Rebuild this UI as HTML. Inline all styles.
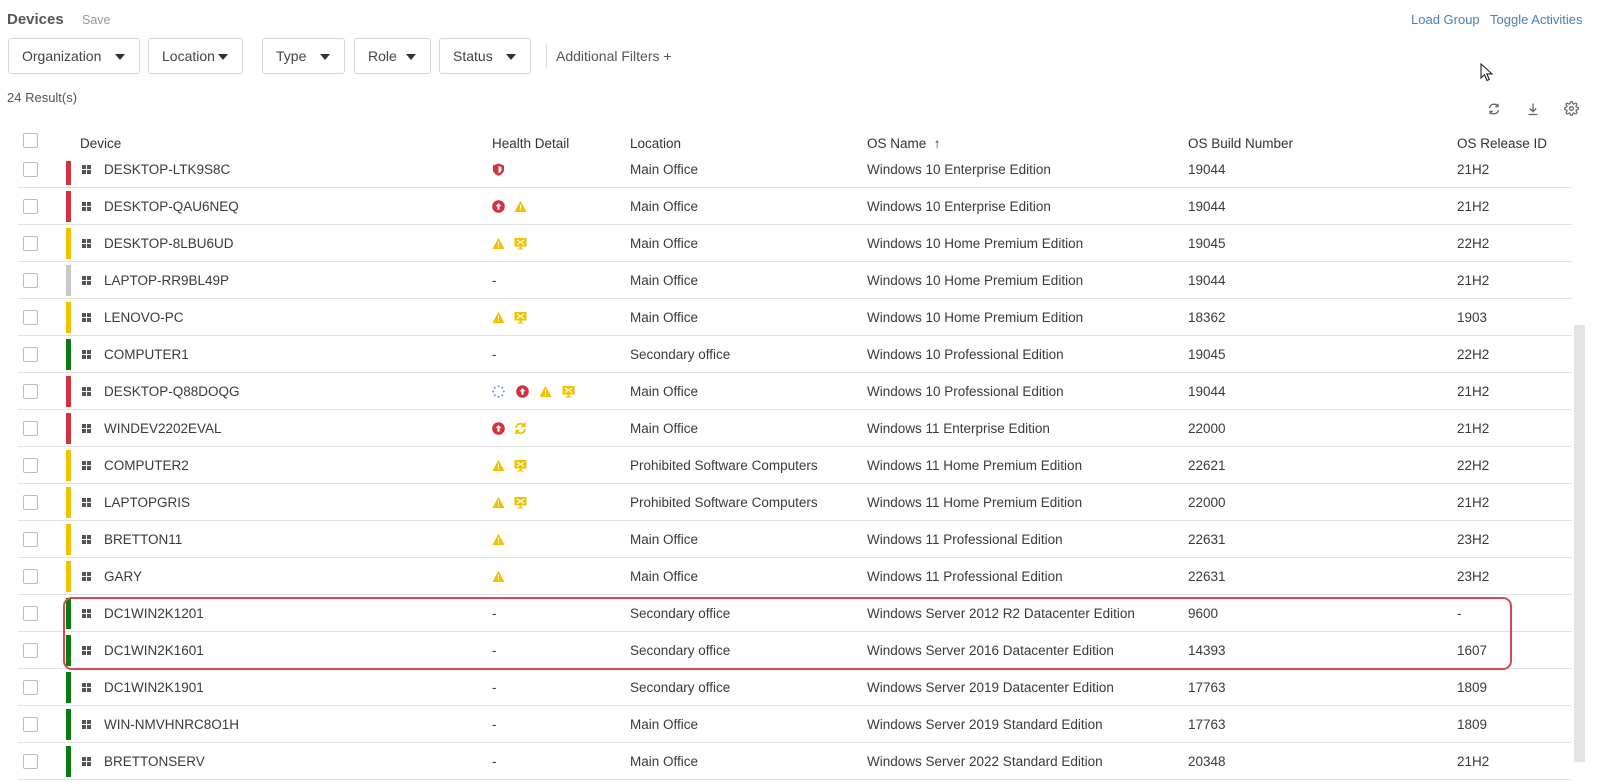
<!DOCTYPE html>
<html><head><meta charset="utf-8"><style>
*{box-sizing:border-box;margin:0;padding:0}
body{width:1600px;height:783px;overflow:hidden;background:#fff;font-family:"Liberation Sans",sans-serif;color:#333;font-size:13px;position:relative}
.a{position:absolute;white-space:nowrap}
.btn{position:absolute;top:38px;height:36px;border:1px solid #d6d6d6;border-radius:3px;font-size:14px;color:#444;padding:0 0 0 13px;line-height:34px;white-space:nowrap}
.btn i{position:absolute;right:14px;top:15px;width:0;height:0;border-left:5px solid transparent;border-right:5px solid transparent;border-top:6px solid #333}
.row{position:absolute;left:0;width:1600px;height:37px}
.row .ln{position:absolute;left:18px;width:1554px;bottom:0;height:1px;background:#e2e2e2}
.cb{position:absolute;left:23px;top:11px;width:15px;height:15px;border:1px solid #bdbdbd;border-radius:2px;background:#fff}
.bar{position:absolute;left:66px;top:3px;width:5px;height:31px}
.r{background:#d0323f}.y{background:#f2c200}.g{background:#0b7a12}.gr{background:#c8c8cc}
.win{position:absolute;left:82px;top:14px;width:10px;height:10px}
.win b{position:absolute;width:4px;height:4px;background:#555}
.t{position:absolute;top:11px;font-size:13.5px;color:#3a3a3a;white-space:nowrap}
.c1{left:104px}.c2{left:492px}.c3{left:630px}.c4{left:867px}.c5{left:1188px}.c6{left:1457px}
.hi{position:absolute;left:492px;top:0;width:120px;height:37px}
.ic{position:absolute;top:12px;width:13px;height:13px}
.h{position:absolute;top:136px;font-size:13.5px;color:#333}
</style></head><body>
<div class="a" style="left:7px;top:11px;font-size:15px;font-weight:bold;color:#555">Devices</div>
<div class="a" style="left:82px;top:13px;font-size:12.5px;color:#999">Save</div>
<div class="a" style="left:1411px;top:12px;font-size:13px;color:#4a7fb5">Load Group</div>
<div class="a" style="left:1490px;top:12px;font-size:13px;color:#4a7fb5">Toggle Activities</div>

<div class="btn" style="left:8px;width:132px">Organization<i></i></div>
<div class="btn" style="left:148px;width:95px">Location<i></i></div>
<div class="btn" style="left:262px;width:83px">Type<i></i></div>
<div class="btn" style="left:354px;width:77px">Role<i></i></div>
<div class="btn" style="left:439px;width:92px">Status<i></i></div>
<div class="a" style="left:546px;top:44px;width:1px;height:24px;background:#ddd"></div>
<div class="a" style="left:556px;top:48px;font-size:14px;color:#555">Additional Filters +</div>
<div class="a" style="left:7px;top:90px;font-size:13px;color:#555">24 Result(s)</div>

<svg class="a" style="left:1487px;top:102px" width="14" height="14" viewBox="0 0 14 14" fill="none" stroke="#666" stroke-width="1.3"><path d="M2.5 6A4.6 4.6 0 0 1 11 4.5M11.5 8A4.6 4.6 0 0 1 3 9.5M11 1.8V4.6H8.2M3 12.2V9.4h2.8"/></svg>
<svg class="a" style="left:1526px;top:102px" width="14" height="14" viewBox="0 0 14 14" fill="none" stroke="#666" stroke-width="1.3"><path d="M7 1.5v8M3.8 6.5 7 9.7l3.2-3.2M2.5 12.5h9"/></svg>
<svg class="a" style="left:1564px;top:101px" width="15" height="15" viewBox="0 0 24 24" fill="none" stroke="#666" stroke-width="2"><circle cx="12" cy="12" r="3"/><path d="M19.4 15a1.7 1.7 0 0 0 .3 1.8l.1.1a2 2 0 1 1-2.8 2.8l-.1-.1a1.7 1.7 0 0 0-1.8-.3 1.7 1.7 0 0 0-1 1.5V21a2 2 0 1 1-4 0v-.1a1.7 1.7 0 0 0-1.1-1.5 1.7 1.7 0 0 0-1.8.3l-.1.1a2 2 0 1 1-2.8-2.8l.1-.1a1.7 1.7 0 0 0 .3-1.8 1.7 1.7 0 0 0-1.5-1H3a2 2 0 1 1 0-4h.1a1.7 1.7 0 0 0 1.5-1.1 1.7 1.7 0 0 0-.3-1.8l-.1-.1a2 2 0 1 1 2.8-2.8l.1.1a1.7 1.7 0 0 0 1.8.3H9a1.7 1.7 0 0 0 1-1.5V3a2 2 0 1 1 4 0v.1a1.7 1.7 0 0 0 1 1.5 1.7 1.7 0 0 0 1.8-.3l.1-.1a2 2 0 1 1 2.8 2.8l-.1.1a1.7 1.7 0 0 0-.3 1.8V9a1.7 1.7 0 0 0 1.5 1H21a2 2 0 1 1 0 4h-.1a1.7 1.7 0 0 0-1.5 1z"/></svg>
<svg class="a" style="left:1480px;top:63px" width="14" height="20" viewBox="0 0 14 20"><path d="M1 1v14l3.5-3.3 2.5 5.8 2.3-1-2.5-5.6H12z" fill="#fff" stroke="#222" stroke-width="1.1"/></svg>

<div class="a" style="left:1574px;top:325px;width:11px;height:437px;background:#e3e3e3"></div>

<div class="row" style="top:151px"><div class="cb"></div><div class="bar r" style="top:10px;height:24px"></div><div class="win"><b style="left:0;top:0"></b><b style="left:5px;top:0"></b><b style="left:0;top:5px"></b><b style="left:5px;top:5px"></b></div><div class="t c1">DESKTOP-LTK9S8C</div><div class="hi"><svg class="ic" style="left:0" viewBox="0 0 13 13"><path d="M6.5 .5 12 2.5v4c0 3-2.5 5.2-5.5 6.2C3.5 11.7 1 9.5 1 6.5v-4z" fill="#d0323f"/><path d="M6.5 3 9.5 4v2.5c0 1.7-1.3 3-3 3.7z" fill="#fff"/></svg></div><div class="t c3">Main Office</div><div class="t c4">Windows 10 Enterprise Edition</div><div class="t c5">19044</div><div class="t c6">21H2</div><div class="ln"></div></div>

<div class="a" style="left:0;top:124px;width:1572px;height:32px;background:#fff"></div>
<div class="a" style="left:23px;top:133px;width:15px;height:15px;border:1px solid #bdbdbd;border-radius:2px"></div>
<div class="h" style="left:80px">Device</div>
<div class="h" style="left:492px">Health Detail</div>
<div class="h" style="left:630px">Location</div>
<div class="h" style="left:867px">OS Name &nbsp;↑</div>
<div class="h" style="left:1188px">OS Build Number</div>
<div class="h" style="left:1457px">OS Release ID</div>

<div class="row" style="top:188px"><div class="cb"></div><div class="bar r"></div><div class="win"><b style="left:0;top:0"></b><b style="left:5px;top:0"></b><b style="left:0;top:5px"></b><b style="left:5px;top:5px"></b></div><div class="t c1">DESKTOP-QAU6NEQ</div><div class="hi"><svg class="ic" style="left:0" viewBox="0 0 13 13"><circle cx="6.5" cy="6.5" r="6.3" fill="#d0323f"/><path d="M6.5 3 3.5 6.3h2v3.4h2V6.3h2z" fill="#fff"/></svg><svg class="ic" style="left:22px" viewBox="0 0 13 13"><path d="M6.5.8 12.6 12H.4z" fill="#f2c200"/><path d="M6 4.5h1v4H6zM6 9.5h1v1H6z" fill="#fff"/></svg></div><div class="t c3">Main Office</div><div class="t c4">Windows 10 Enterprise Edition</div><div class="t c5">19044</div><div class="t c6">21H2</div><div class="ln"></div></div>

<div class="row" style="top:225px"><div class="cb"></div><div class="bar y"></div><div class="win"><b style="left:0;top:0"></b><b style="left:5px;top:0"></b><b style="left:0;top:5px"></b><b style="left:5px;top:5px"></b></div><div class="t c1">DESKTOP-8LBU6UD</div><div class="hi"><svg class="ic" style="left:0" viewBox="0 0 13 13"><path d="M6.5.8 12.6 12H.4z" fill="#f2c200"/><path d="M6 4.5h1v4H6zM6 9.5h1v1H6z" fill="#fff"/></svg><svg class="ic" style="left:22px" viewBox="0 0 13 13"><rect x=".5" y="1" width="12" height="8.5" fill="#f2c200"/><path d="M3 3l7 4.5M10 3 3 7.5" stroke="#fff" stroke-width="1.3"/><path d="M5.5 9.5h2v2h2v1h-6v-1h2z" fill="#f2c200"/></svg></div><div class="t c3">Main Office</div><div class="t c4">Windows 10 Home Premium Edition</div><div class="t c5">19045</div><div class="t c6">22H2</div><div class="ln"></div></div>

<div class="row" style="top:262px"><div class="cb"></div><div class="bar gr"></div><div class="win"><b style="left:0;top:0"></b><b style="left:5px;top:0"></b><b style="left:0;top:5px"></b><b style="left:5px;top:5px"></b></div><div class="t c1">LAPTOP-RR9BL49P</div><div class="t c2">-</div><div class="t c3">Main Office</div><div class="t c4">Windows 10 Home Premium Edition</div><div class="t c5">19044</div><div class="t c6">21H2</div><div class="ln"></div></div>

<div class="row" style="top:299px"><div class="cb"></div><div class="bar y"></div><div class="win"><b style="left:0;top:0"></b><b style="left:5px;top:0"></b><b style="left:0;top:5px"></b><b style="left:5px;top:5px"></b></div><div class="t c1">LENOVO-PC</div><div class="hi"><svg class="ic" style="left:0" viewBox="0 0 13 13"><path d="M6.5.8 12.6 12H.4z" fill="#f2c200"/><path d="M6 4.5h1v4H6zM6 9.5h1v1H6z" fill="#fff"/></svg><svg class="ic" style="left:22px" viewBox="0 0 13 13"><rect x=".5" y="1" width="12" height="8.5" fill="#f2c200"/><path d="M3 3l7 4.5M10 3 3 7.5" stroke="#fff" stroke-width="1.3"/><path d="M5.5 9.5h2v2h2v1h-6v-1h2z" fill="#f2c200"/></svg></div><div class="t c3">Main Office</div><div class="t c4">Windows 10 Home Premium Edition</div><div class="t c5">18362</div><div class="t c6">1903</div><div class="ln"></div></div>

<div class="row" style="top:336px"><div class="cb"></div><div class="bar g"></div><div class="win"><b style="left:0;top:0"></b><b style="left:5px;top:0"></b><b style="left:0;top:5px"></b><b style="left:5px;top:5px"></b></div><div class="t c1">COMPUTER1</div><div class="t c2">-</div><div class="t c3">Secondary office</div><div class="t c4">Windows 10 Professional Edition</div><div class="t c5">19045</div><div class="t c6">22H2</div><div class="ln"></div></div>

<div class="row" style="top:373px"><div class="cb"></div><div class="bar r"></div><div class="win"><b style="left:0;top:0"></b><b style="left:5px;top:0"></b><b style="left:0;top:5px"></b><b style="left:5px;top:5px"></b></div><div class="t c1">DESKTOP-Q88DOQG</div><div class="hi"><svg class="ic" style="left:0" viewBox="0 0 13 13" fill="#6a8fc0"><circle cx="6.5" cy="1.2" r="1"/><circle cx="10.3" cy="2.8" r="1"/><circle cx="11.8" cy="6.5" r="1"/><circle cx="10.3" cy="10.2" r="1"/><circle cx="6.5" cy="11.8" r="1"/><circle cx="2.7" cy="10.2" r="1"/><circle cx="1.2" cy="6.5" r="1"/><circle cx="2.7" cy="2.8" r="1"/></svg><svg class="ic" style="left:24px" viewBox="0 0 13 13"><circle cx="6.5" cy="6.5" r="6.3" fill="#d0323f"/><path d="M6.5 3 3.5 6.3h2v3.4h2V6.3h2z" fill="#fff"/></svg><svg class="ic" style="left:47px" viewBox="0 0 13 13"><path d="M6.5.8 12.6 12H.4z" fill="#f2c200"/><path d="M6 4.5h1v4H6zM6 9.5h1v1H6z" fill="#fff"/></svg><svg class="ic" style="left:70px" viewBox="0 0 13 13"><rect x=".5" y="1" width="12" height="8.5" fill="#f2c200"/><path d="M3 3l7 4.5M10 3 3 7.5" stroke="#fff" stroke-width="1.3"/><path d="M5.5 9.5h2v2h2v1h-6v-1h2z" fill="#f2c200"/></svg></div><div class="t c3">Main Office</div><div class="t c4">Windows 10 Professional Edition</div><div class="t c5">19044</div><div class="t c6">21H2</div><div class="ln"></div></div>

<div class="row" style="top:410px"><div class="cb"></div><div class="bar r"></div><div class="win"><b style="left:0;top:0"></b><b style="left:5px;top:0"></b><b style="left:0;top:5px"></b><b style="left:5px;top:5px"></b></div><div class="t c1">WINDEV2202EVAL</div><div class="hi"><svg class="ic" style="left:0" viewBox="0 0 13 13"><circle cx="6.5" cy="6.5" r="6.3" fill="#d0323f"/><path d="M6.5 3 3.5 6.3h2v3.4h2V6.3h2z" fill="#fff"/></svg><svg class="ic" style="left:22px" viewBox="0 0 13 13" fill="none" stroke="#f2c200" stroke-width="1.8"><path d="M2 6a4.6 4.6 0 0 1 8.5-2M11 7a4.6 4.6 0 0 1-8.5 2M10.8 1v3.2H7.6M2.2 12V8.8h3.2"/></svg></div><div class="t c3">Main Office</div><div class="t c4">Windows 11 Enterprise Edition</div><div class="t c5">22000</div><div class="t c6">21H2</div><div class="ln"></div></div>

<div class="row" style="top:447px"><div class="cb"></div><div class="bar y"></div><div class="win"><b style="left:0;top:0"></b><b style="left:5px;top:0"></b><b style="left:0;top:5px"></b><b style="left:5px;top:5px"></b></div><div class="t c1">COMPUTER2</div><div class="hi"><svg class="ic" style="left:0" viewBox="0 0 13 13"><path d="M6.5.8 12.6 12H.4z" fill="#f2c200"/><path d="M6 4.5h1v4H6zM6 9.5h1v1H6z" fill="#fff"/></svg><svg class="ic" style="left:22px" viewBox="0 0 13 13"><rect x=".5" y="1" width="12" height="8.5" fill="#f2c200"/><path d="M3 3l7 4.5M10 3 3 7.5" stroke="#fff" stroke-width="1.3"/><path d="M5.5 9.5h2v2h2v1h-6v-1h2z" fill="#f2c200"/></svg></div><div class="t c3">Prohibited Software Computers</div><div class="t c4">Windows 11 Home Premium Edition</div><div class="t c5">22621</div><div class="t c6">22H2</div><div class="ln"></div></div>

<div class="row" style="top:484px"><div class="cb"></div><div class="bar y"></div><div class="win"><b style="left:0;top:0"></b><b style="left:5px;top:0"></b><b style="left:0;top:5px"></b><b style="left:5px;top:5px"></b></div><div class="t c1">LAPTOPGRIS</div><div class="hi"><svg class="ic" style="left:0" viewBox="0 0 13 13"><path d="M6.5.8 12.6 12H.4z" fill="#f2c200"/><path d="M6 4.5h1v4H6zM6 9.5h1v1H6z" fill="#fff"/></svg><svg class="ic" style="left:22px" viewBox="0 0 13 13"><rect x=".5" y="1" width="12" height="8.5" fill="#f2c200"/><path d="M3 3l7 4.5M10 3 3 7.5" stroke="#fff" stroke-width="1.3"/><path d="M5.5 9.5h2v2h2v1h-6v-1h2z" fill="#f2c200"/></svg></div><div class="t c3">Prohibited Software Computers</div><div class="t c4">Windows 11 Home Premium Edition</div><div class="t c5">22000</div><div class="t c6">21H2</div><div class="ln"></div></div>

<div class="row" style="top:521px"><div class="cb"></div><div class="bar y"></div><div class="win"><b style="left:0;top:0"></b><b style="left:5px;top:0"></b><b style="left:0;top:5px"></b><b style="left:5px;top:5px"></b></div><div class="t c1">BRETTON11</div><div class="hi"><svg class="ic" style="left:0" viewBox="0 0 13 13"><path d="M6.5.8 12.6 12H.4z" fill="#f2c200"/><path d="M6 4.5h1v4H6zM6 9.5h1v1H6z" fill="#fff"/></svg></div><div class="t c3">Main Office</div><div class="t c4">Windows 11 Professional Edition</div><div class="t c5">22631</div><div class="t c6">23H2</div><div class="ln"></div></div>

<div class="row" style="top:558px"><div class="cb"></div><div class="bar y"></div><div class="win"><b style="left:0;top:0"></b><b style="left:5px;top:0"></b><b style="left:0;top:5px"></b><b style="left:5px;top:5px"></b></div><div class="t c1">GARY</div><div class="hi"><svg class="ic" style="left:0" viewBox="0 0 13 13"><path d="M6.5.8 12.6 12H.4z" fill="#f2c200"/><path d="M6 4.5h1v4H6zM6 9.5h1v1H6z" fill="#fff"/></svg></div><div class="t c3">Main Office</div><div class="t c4">Windows 11 Professional Edition</div><div class="t c5">22631</div><div class="t c6">23H2</div><div class="ln"></div></div>

<div class="row" style="top:595px"><div class="cb"></div><div class="bar g"></div><div class="win"><b style="left:0;top:0"></b><b style="left:5px;top:0"></b><b style="left:0;top:5px"></b><b style="left:5px;top:5px"></b></div><div class="t c1">DC1WIN2K1201</div><div class="t c2">-</div><div class="t c3">Secondary office</div><div class="t c4">Windows Server 2012 R2 Datacenter Edition</div><div class="t c5">9600</div><div class="t c6">-</div><div class="ln"></div></div>

<div class="row" style="top:632px"><div class="cb"></div><div class="bar g"></div><div class="win"><b style="left:0;top:0"></b><b style="left:5px;top:0"></b><b style="left:0;top:5px"></b><b style="left:5px;top:5px"></b></div><div class="t c1">DC1WIN2K1601</div><div class="t c2">-</div><div class="t c3">Secondary office</div><div class="t c4">Windows Server 2016 Datacenter Edition</div><div class="t c5">14393</div><div class="t c6">1607</div><div class="ln"></div></div>

<div class="row" style="top:669px"><div class="cb"></div><div class="bar g"></div><div class="win"><b style="left:0;top:0"></b><b style="left:5px;top:0"></b><b style="left:0;top:5px"></b><b style="left:5px;top:5px"></b></div><div class="t c1">DC1WIN2K1901</div><div class="t c2">-</div><div class="t c3">Secondary office</div><div class="t c4">Windows Server 2019 Datacenter Edition</div><div class="t c5">17763</div><div class="t c6">1809</div><div class="ln"></div></div>

<div class="row" style="top:706px"><div class="cb"></div><div class="bar g"></div><div class="win"><b style="left:0;top:0"></b><b style="left:5px;top:0"></b><b style="left:0;top:5px"></b><b style="left:5px;top:5px"></b></div><div class="t c1">WIN-NMVHNRC8O1H</div><div class="t c2">-</div><div class="t c3">Main Office</div><div class="t c4">Windows Server 2019 Standard Edition</div><div class="t c5">17763</div><div class="t c6">1809</div><div class="ln"></div></div>

<div class="row" style="top:743px"><div class="cb"></div><div class="bar g"></div><div class="win"><b style="left:0;top:0"></b><b style="left:5px;top:0"></b><b style="left:0;top:5px"></b><b style="left:5px;top:5px"></b></div><div class="t c1">BRETTONSERV</div><div class="t c2">-</div><div class="t c3">Main Office</div><div class="t c4">Windows Server 2022 Standard Edition</div><div class="t c5">20348</div><div class="t c6">21H2</div><div class="ln"></div></div>

<div class="a" style="left:63px;top:597px;width:1449px;height:73px;border:2px solid #d9474f;border-radius:9px"></div>
</body></html>
